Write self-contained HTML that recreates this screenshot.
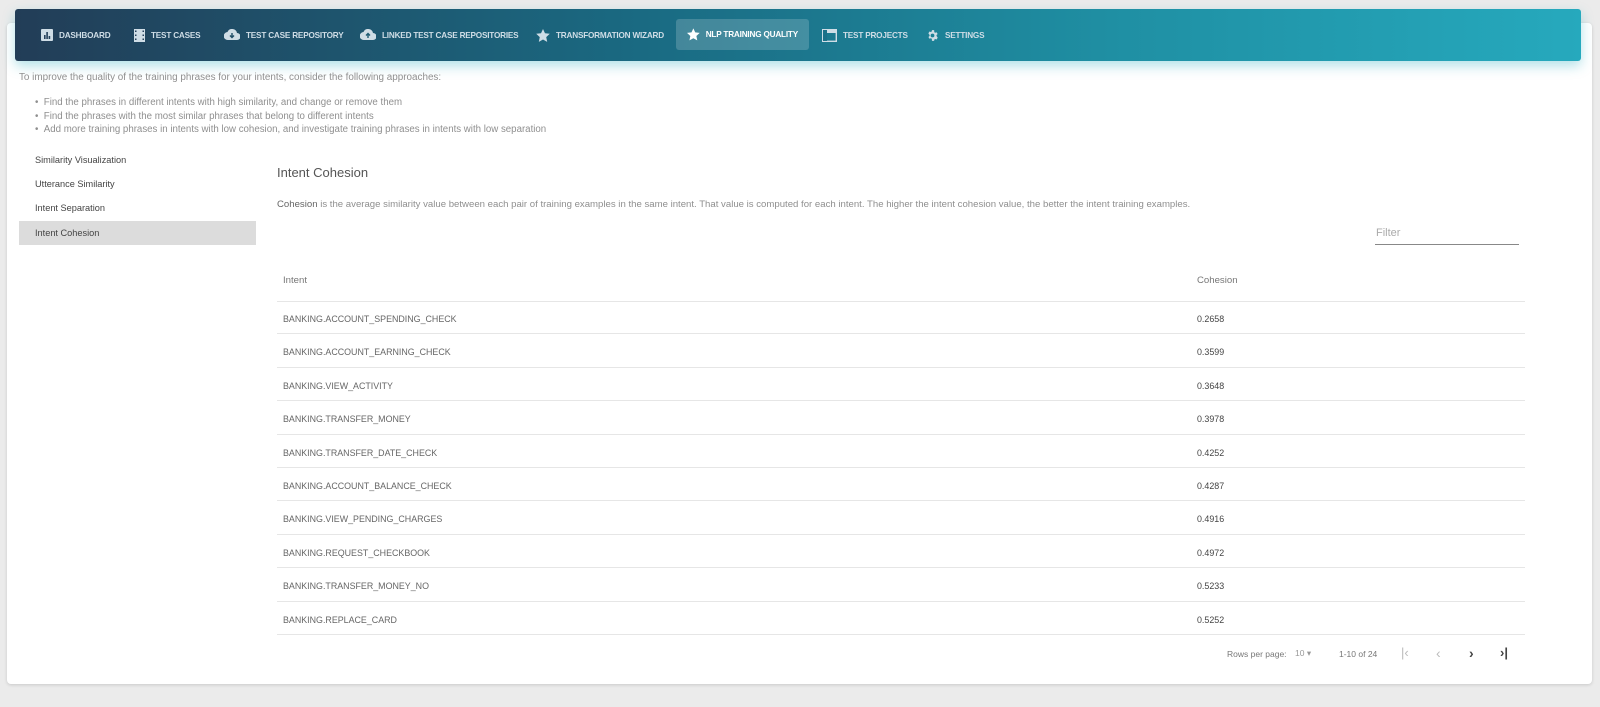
<!DOCTYPE html>
<html><head><meta charset="utf-8"><style>
*{box-sizing:border-box;margin:0;padding:0}
body{width:1600px;height:707px;background:#ebebeb;font-family:"Liberation Sans",sans-serif;position:relative;overflow:hidden}
.card{position:absolute;left:7px;top:23px;width:1585px;height:661px;background:#fff;border-radius:4px;box-shadow:0 1px 3px rgba(0,0,0,.15)}
.nav{position:absolute;left:15px;top:9px;width:1566px;height:52px;border-radius:3px;background:linear-gradient(90deg,#223d57 0%,#1a6a82 40%,#1f8fa3 70%,#26a9bd 100%);box-shadow:0 5px 12px rgba(38,169,189,.35)}
.ni{position:absolute;top:0;height:52px;display:flex;align-items:center;color:#cfdde6;font-size:8.2px;font-weight:bold;letter-spacing:-.2px;white-space:nowrap}
.ni svg{margin-right:6px}
.act{background:rgba(255,255,255,.18);border-radius:3px;top:10px;height:31px;padding:0 11px;color:#fff;width:133px}
.t{position:absolute;color:#8f8f8f;font-size:10px;white-space:nowrap}
.side{position:absolute;left:19px;width:237px;height:24px;font-size:9.2px;color:#444;padding-left:16px;line-height:24px}
.row{position:absolute;left:277px;width:1248px;height:33.4px;border-bottom:1px solid #e6e6e6;font-size:8.9px;color:#666}
.row span{position:absolute;top:13px}
.row .a{left:6px}.row .b{left:920px;color:#444}
</style></head><body>
<div class="card"></div>
<div class="nav">
<div class="ni" style="left:26px"><svg width="12" height="12"><rect width="12" height="12" rx="1" fill="#cfdde6"/><rect x="3" y="6" width="1.6" height="4" fill="#24405a"/><rect x="5.3" y="3" width="1.6" height="7" fill="#24405a"/><rect x="7.6" y="7" width="1.6" height="3" fill="#24405a"/></svg>DASHBOARD</div>
<div class="ni" style="left:119px"><svg width="11" height="13"><rect width="11" height="13" fill="#cfdde6"/><g fill="#24405a"><rect x="1" y="1.5" width="1.5" height="1.5"/><rect x="1" y="5.5" width="1.5" height="1.5"/><rect x="1" y="9.5" width="1.5" height="1.5"/><rect x="8.5" y="1.5" width="1.5" height="1.5"/><rect x="8.5" y="5.5" width="1.5" height="1.5"/><rect x="8.5" y="9.5" width="1.5" height="1.5"/></g></svg>TEST CASES</div>
<div class="ni" style="left:209px"><svg width="16" height="12"><path d="M4 11a4 4 0 0 1-.5-8A5 5 0 0 1 13 4a3.5 3.5 0 0 1 0 7z" fill="#cfdde6"/><path d="M8 4v4M6 6.5l2 2 2-2" stroke="#1f4d66" stroke-width="1.4" fill="none"/></svg>TEST CASE REPOSITORY</div>
<div class="ni" style="left:345px"><svg width="16" height="12"><path d="M4 11a4 4 0 0 1-.5-8A5 5 0 0 1 13 4a3.5 3.5 0 0 1 0 7z" fill="#cfdde6"/><path d="M8 9V5M6 6.5l2-2 2 2" stroke="#1d5a72" stroke-width="1.4" fill="none"/></svg>LINKED TEST CASE REPOSITORIES</div>
<div class="ni" style="left:521px"><svg width="14" height="13" viewBox="0 0 24 23"><path d="M12 0l3.5 7.5 8.5 1-6.3 5.8 1.7 8.4L12 18.5 4.6 22.7l1.7-8.4L0 8.5l8.5-1z" fill="#cfdde6"/></svg>TRANSFORMATION WIZARD</div>
<div class="ni act" style="left:661px"><svg width="14" height="13" viewBox="0 0 24 23"><path d="M12 0l3.5 7.5 8.5 1-6.3 5.8 1.7 8.4L12 18.5 4.6 22.7l1.7-8.4L0 8.5l8.5-1z" fill="#fff"/></svg>NLP TRAINING QUALITY</div>
<div class="ni" style="left:807px"><svg width="15" height="13"><rect x=".7" y=".7" width="13.6" height="11.6" fill="none" stroke="#cfdde6" stroke-width="1.4"/><rect x="1" y="1" width="13" height="3" fill="#cfdde6"/><rect x="1" y="1" width="4" height="11" fill="#1b7189"/></svg>TEST PROJECTS</div>
<div class="ni" style="left:911px"><svg width="13" height="13" viewBox="0 0 24 24"><path d="M12 15.5A3.5 3.5 0 1 1 12 8.5a3.5 3.5 0 0 1 0 7zm7.4-2.5a7.4 7.4 0 0 0 0-2l2.1-1.7-2-3.4-2.5 1a7.5 7.5 0 0 0-1.7-1L15 2h-4l-.4 2.6a7.5 7.5 0 0 0-1.7 1l-2.5-1-2 3.4L6.6 11a7.4 7.4 0 0 0 0 2l-2.1 1.7 2 3.4 2.5-1a7.5 7.5 0 0 0 1.7 1L11 22h4l.4-2.6a7.5 7.5 0 0 0 1.7-1l2.5 1 2-3.4z" fill="#cfdde6"/></svg>SETTINGS</div>
</div>
<div class="t" style="left:19px;top:72px;font-size:9.9px">To improve the quality of the training phrases for your intents, consider the following approaches:</div>
<div class="t" style="left:35px;top:96px;font-size:9.7px;line-height:13.5px">• &nbsp;Find the phrases in different intents with high similarity, and change or remove them<br>• &nbsp;Find the phrases with the most similar phrases that belong to different intents<br>• &nbsp;Add more training phrases in intents with low cohesion, and investigate training phrases in intents with low separation</div>
<div class="side" style="top:148px">Similarity Visualization</div>
<div class="side" style="top:172px">Utterance Similarity</div>
<div class="side" style="top:196px">Intent Separation</div>
<div class="side" style="top:221px;background:#dcdcdc">Intent Cohesion</div>
<div class="t" style="left:277px;top:165px;font-size:13px;color:#555">Intent Cohesion</div>
<div class="t" style="left:277px;top:199px;font-size:9.6px"><span style="color:#666">Cohesion</span> is the average similarity value between each pair of training examples in the same intent. That value is computed for each intent. The higher the intent cohesion value, the better the intent training examples.</div>
<div class="t" style="left:1376px;top:227px;font-size:11px;color:#aaa">Filter</div>
<div style="position:absolute;left:1375px;top:244px;width:144px;height:1px;background:#888"></div>
<div class="row" style="top:267px;height:35px"><span class="a" style="top:8px;color:#777;font-size:9.6px">Intent</span><span class="b" style="top:8px;color:#777;font-size:9.6px">Cohesion</span></div>
<div class="row" style="top:301px"><span class="a">BANKING.ACCOUNT_SPENDING_CHECK</span><span class="b">0.2658</span></div>
<div class="row" style="top:334.4px"><span class="a">BANKING.ACCOUNT_EARNING_CHECK</span><span class="b">0.3599</span></div>
<div class="row" style="top:367.8px"><span class="a">BANKING.VIEW_ACTIVITY</span><span class="b">0.3648</span></div>
<div class="row" style="top:401.2px"><span class="a">BANKING.TRANSFER_MONEY</span><span class="b">0.3978</span></div>
<div class="row" style="top:434.6px"><span class="a">BANKING.TRANSFER_DATE_CHECK</span><span class="b">0.4252</span></div>
<div class="row" style="top:468px"><span class="a">BANKING.ACCOUNT_BALANCE_CHECK</span><span class="b">0.4287</span></div>
<div class="row" style="top:501.4px"><span class="a">BANKING.VIEW_PENDING_CHARGES</span><span class="b">0.4916</span></div>
<div class="row" style="top:534.8px"><span class="a">BANKING.REQUEST_CHECKBOOK</span><span class="b">0.4972</span></div>
<div class="row" style="top:568.2px"><span class="a">BANKING.TRANSFER_MONEY_NO</span><span class="b">0.5233</span></div>
<div class="row" style="top:601.6px"><span class="a">BANKING.REPLACE_CARD</span><span class="b">0.5252</span></div>
<div class="t" style="left:1227px;top:649px;font-size:8.5px;color:#777">Rows per page:</div>
<div class="t" style="left:1295px;top:648px;font-size:8.5px;color:#999">10 ▾</div>
<div class="t" style="left:1339px;top:649px;font-size:8.5px;color:#777">1-10 of 24</div>
<div class="t" style="left:1401px;top:645px;font-size:13px;color:#bbb">|‹</div>
<div class="t" style="left:1436px;top:645px;font-size:14px;color:#bbb">‹</div>
<div class="t" style="left:1469px;top:645px;font-size:14px;color:#444;font-weight:bold">›</div>
<div class="t" style="left:1500px;top:645px;font-size:13px;color:#444;font-weight:bold">›|</div>
</body></html>
